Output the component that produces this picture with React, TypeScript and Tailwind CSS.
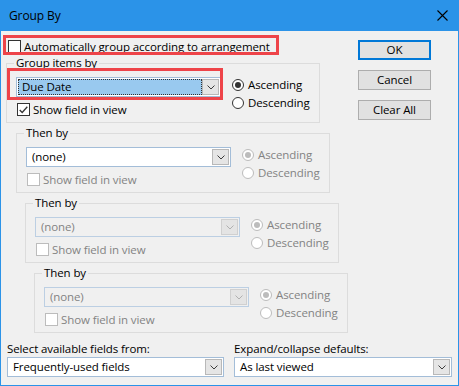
import React from "react";

type ComboProps = {
  value: string;
  disabled?: boolean;
  focused?: boolean;
  className?: string;
};

function Chevron({ disabled }: { disabled?: boolean }) {
  return (
    <svg width="8" height="5" viewBox="0 0 8 5" className="block">
      <polyline
        points="0.5,0.5 4,4 7.5,0.5"
        fill="none"
        stroke={disabled ? "#b0b0b0" : "#3c3c3c"}
        strokeWidth="1"
      />
    </svg>
  );
}

function Combo({ value, disabled, focused, className = "" }: ComboProps) {
  return (
    <div
      className={`flex h-[20px] items-stretch border p-[1px] ${
        disabled ? "border-[#bccfe3] bg-[#f0f0f0]" : "border-[#a3bdd8] bg-white"
      } ${className}`}
    >
      <div className="flex flex-1 items-center">
        {focused ? (
          <span className="flex h-full w-full items-center border border-dotted border-[#333] bg-[#99c9ef] pl-[3px] text-black">
            {value}
          </span>
        ) : (
          <span className={`pl-[4px] ${disabled ? "text-[#838383]" : "text-black"}`}>{value}</span>
        )}
      </div>
      <div
        className={`flex w-[17px] items-center justify-center border ${
          disabled ? "border-[#d0d0d0] bg-[#e4e4e4]" : "border-[#b8b8b8] bg-[#e5e5e5]"
        }`}
      >
        <Chevron disabled={disabled} />
      </div>
    </div>
  );
}

function Check({ checked, disabled }: { checked?: boolean; disabled?: boolean }) {
  return (
    <span
      className={`flex h-[13px] w-[13px] shrink-0 items-center justify-center border ${
        disabled ? "border-[#bcbcbc] bg-white" : "border-[#333] bg-white"
      }`}
    >
      {checked && (
        <svg width="9" height="8" viewBox="0 0 9 8" className="block">
          <polyline points="0.7,4 3.2,6.5 8.3,0.8" fill="none" stroke="#333" strokeWidth="1.3" />
        </svg>
      )}
    </span>
  );
}

function Radio({ label, checked, disabled }: { label: string; checked?: boolean; disabled?: boolean }) {
  return (
    <div className="flex h-[12px] items-center">
      <span
        className={`flex h-[12px] w-[12px] items-center justify-center rounded-full border ${
          disabled ? "border-[#bcbcbc] bg-white" : "border-[#333] bg-white"
        }`}
      >
        {checked && (
          <span className={`h-[6px] w-[6px] rounded-full ${disabled ? "bg-[#bcbcbc]" : "bg-[#333]"}`} />
        )}
      </span>
      <span className={`ml-[4px] ${disabled ? "text-[#838383]" : "text-black"}`}>{label}</span>
    </div>
  );
}

type GroupProps = {
  legend: string;
  value: string;
  className?: string;
  comboDisabled?: boolean;
  focused?: boolean;
  showChecked?: boolean;
  dim?: boolean;
};

function SortGroup({ legend, value, className = "", comboDisabled, focused, showChecked, dim }: GroupProps) {
  return (
    <div className={`relative flex w-[314px] border border-[#dcdcdc] pb-[6px] pl-[9px] pt-[13px] ${className}`}>
      <span className="absolute -top-[9px] left-[7px] bg-[#f0f0f0] px-[2px] leading-[16px] text-black">
        {legend}
      </span>
      <div className="flex w-[205px] flex-col">
        <Combo value={value} disabled={comboDisabled} focused={focused} />
        <div className="ml-[1px] mt-[6px] flex h-[13px] items-center">
          <Check checked={showChecked} disabled={dim} />
          <span className={`ml-[3px] ${dim ? "text-[#838383]" : "text-black"}`}>Show field in view</span>
        </div>
      </div>
      <div className="ml-[11px] mt-[2px] flex flex-col gap-[6px]">
        <Radio label="Ascending" checked disabled={dim} />
        <Radio label="Descending" disabled={dim} />
      </div>
    </div>
  );
}

const thenBy = [
  { indent: "ml-[10px]", comboDisabled: false },
  { indent: "ml-[19px]", comboDisabled: true },
  { indent: "ml-[28px]", comboDisabled: true },
];

const buttons = ["OK", "Cancel", "Clear All"];

export default function App() {
  return (
    <div className="relative flex h-[386px] w-[459px] flex-col border-x border-b border-[#2b93e8] bg-[#f0f0f0] font-['Open_Sans',sans-serif] text-[11.5px] leading-[16px] tracking-[-0.1px] text-black">
      {/* title bar */}
      <div className="flex h-[31px] shrink-0 items-center justify-between bg-[#2b93e8] pl-[8px] pr-[10px]">
        <span className="text-[12px] text-black">Group By</span>
        <svg width="11" height="11" viewBox="0 0 11 11" className="block">
          <path d="M0.5 0.5 L10.5 10.5 M10.5 0.5 L0.5 10.5" stroke="#000" strokeWidth="1.1" />
        </svg>
      </div>

      <div className="flex flex-1 flex-col pl-[5px]">
        <div className="flex items-start">
          <div className="flex w-[342px] flex-col">
            <div className="ml-[2px] mt-[9px] flex h-[13px] items-center">
              <Check />
              <span className="ml-[3px]">Automatically group according to arrangement</span>
            </div>

            <SortGroup
              legend="Group items by"
              value="Due Date"
              focused
              showChecked
              className="mt-[10px]"
            />

            {thenBy.map((g, i) => (
              <SortGroup
                key={i}
                legend="Then by"
                value="(none)"
                comboDisabled={g.comboDisabled}
                dim
                className={`mt-[10px] ${g.indent}`}
              />
            ))}
          </div>

          <div className="ml-[10px] mt-[9px] flex flex-col gap-[10px]">
            {buttons.map((b, i) => (
              <div
                key={b}
                className={`flex h-[20px] w-[73px] items-center justify-center bg-[#e1e1e1] ${
                  i === 0 ? "border-2 border-[#0078d7]" : "border border-[#adadad]"
                }`}
              >
                {b}
              </div>
            ))}
          </div>
        </div>

        <div className="ml-[1px] mt-[8px] flex gap-[10px]">
          <div className="flex w-[217px] flex-col">
            <span>Select available fields from:</span>
            <Combo value="Frequently-used fields" />
          </div>
          <div className="flex w-[218px] flex-col">
            <span>Expand/collapse defaults:</span>
            <Combo value="As last viewed" />
          </div>
        </div>
      </div>

      {/* annotation boxes */}
      <div className="pointer-events-none absolute left-[2px] top-[35px] h-[20px] w-[276px] border-[3px] border-[#ee4449]" />
      <div className="pointer-events-none absolute left-[6px] top-[68px] h-[32px] w-[216px] border-[3px] border-[#ee4449]" />
    </div>
  );
}
